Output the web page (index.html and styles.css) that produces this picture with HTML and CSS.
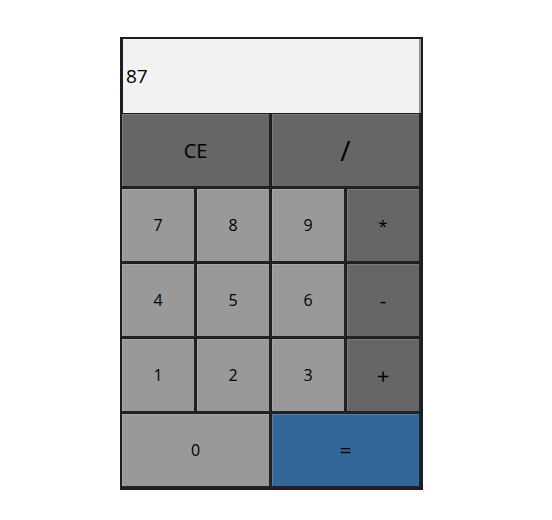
FILE: index.html
```html
<!DOCTYPE html>
<html>
<head>
<meta charset="utf-8">
<link rel="stylesheet" href="styles.css">
</head>
<body>
<div class="calc">
  <div class="display">87</div>
  <div class="keys">
    <div class="key op ce span2">CE</div>
    <div class="key op slash span2">/</div>
    <div class="key num">7</div>
    <div class="key num">8</div>
    <div class="key num">9</div>
    <div class="key op star">*</div>
    <div class="key num">4</div>
    <div class="key num">5</div>
    <div class="key num">6</div>
    <div class="key op minus">-</div>
    <div class="key num">1</div>
    <div class="key num">2</div>
    <div class="key num">3</div>
    <div class="key op plus">+</div>
    <div class="key num span2">0</div>
    <div class="key eq span2">=</div>
  </div>
</div>
</body>
</html>
```
FILE: styles.css
```css
html, body {
  margin: 0;
  padding: 0;
  background: #ffffff;
}
body {
  padding-top: 37px;
  padding-left: 120px;
  font-family: "Open Sans", "Noto Sans", sans-serif;
}
.calc {
  width: 300px;
  border-top: 2px solid #1e1e1e;
  border-left: 1px solid #1e1e1e;
  border-right: 2px solid #1e1e1e;
  border-bottom: 2px solid #1e1e1e;
  background: #1e1e1e;
}
.display {
  box-sizing: border-box;
  height: 74px;
  background: #f2f2f2;
  border-left: 2px solid #1e1e1e;
  border-right: 2px solid #9a9a9a;
  padding-left: 3px;
  display: flex;
  align-items: center;
  font-size: 19px;
  color: #000;
}
.keys {
  display: grid;
  grid-template-columns: repeat(4, 75px);
  grid-auto-rows: 75px;
}
.key {
  box-sizing: border-box;
  display: flex;
  align-items: center;
  justify-content: center;
  border-top: 1px solid #1e1e1e;
  border-left: 1px solid #1e1e1e;
  border-right: 2px solid #222222;
  border-bottom: 2px solid #222222;
  box-shadow: inset 1px 1px 0 #7a7a7a;
  font-size: 16px;
  color: #000;
}
.num {
  background: #999999;
  box-shadow: inset 1px 1px 0 #a8a8a8;
}
.op {
  background: #666666;
}
.eq {
  background: #336699;
  box-shadow: inset 1px 1px 0 #4d7fb0;
  font-size: 21px;
}
.ce {
  font-size: 20px;
}
.slash {
  font-size: 28px;
}
.star {
  font-size: 17px;
}
.minus {
  font-size: 20px;
}
.plus {
  font-size: 22px;
}
.span2 {
  grid-column: span 2;
}
```
